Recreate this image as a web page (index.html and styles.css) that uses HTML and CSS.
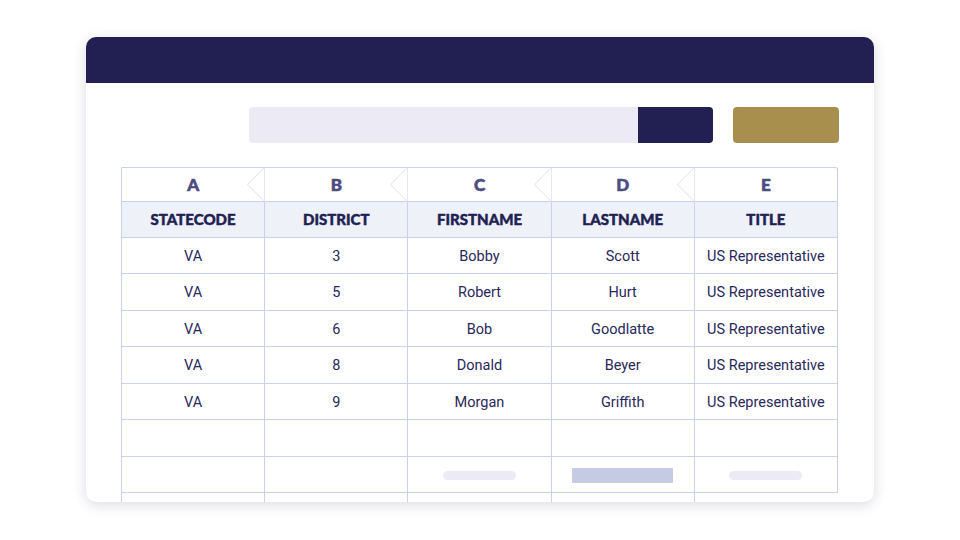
FILE: index.html
```html
<!DOCTYPE html>
<html>
<head>
<meta charset="utf-8">
<link rel="stylesheet" href="styles.css">
</head>
<body>
<div class="card">
  <div class="topbar"></div>
  <div class="toolbar">
    <div class="search"><div class="search-btn"></div></div>
    <div class="gold-btn"></div>
  </div>
  <div class="sheet">
    <div class="cell letter chev">A</div>
    <div class="cell letter chev">B</div>
    <div class="cell letter chev">C</div>
    <div class="cell letter chev">D</div>
    <div class="cell letter">E</div>

    <div class="cell head">STATECODE</div>
    <div class="cell head">DISTRICT</div>
    <div class="cell head">FIRSTNAME</div>
    <div class="cell head">LASTNAME</div>
    <div class="cell head">TITLE</div>

    <div class="cell">VA</div><div class="cell">3</div><div class="cell">Bobby</div><div class="cell">Scott</div><div class="cell">US Representative</div>
    <div class="cell">VA</div><div class="cell">5</div><div class="cell">Robert</div><div class="cell">Hurt</div><div class="cell">US Representative</div>
    <div class="cell">VA</div><div class="cell">6</div><div class="cell">Bob</div><div class="cell">Goodlatte</div><div class="cell">US Representative</div>
    <div class="cell">VA</div><div class="cell">8</div><div class="cell">Donald</div><div class="cell">Beyer</div><div class="cell">US Representative</div>
    <div class="cell">VA</div><div class="cell">9</div><div class="cell">Morgan</div><div class="cell">Griffith</div><div class="cell">US Representative</div>

    <div class="cell"></div><div class="cell"></div><div class="cell"></div><div class="cell"></div><div class="cell"></div>

    <div class="cell"></div><div class="cell"></div>
    <div class="cell"><span class="pill"></span></div>
    <div class="cell"><span class="block"></span></div>
    <div class="cell"><span class="pill"></span></div>

    <div class="cell"></div><div class="cell"></div><div class="cell"></div><div class="cell"></div><div class="cell last"></div>
  </div>
</div>
</body>
</html>
```

FILE: styles.css
```css
* { box-sizing: border-box; }
html, body {
  margin: 0;
  padding: 0;
  background: #ffffff;
  width: 960px;
  height: 540px;
  overflow: hidden;
}
body {
  padding: 37px 0 0 86px;
  font-family: Roboto, "Liberation Sans", sans-serif;
}
.card {
  width: 788px;
  height: 465px;
  background: #ffffff;
  border-radius: 10px;
  overflow: hidden;
  box-shadow: 0 3px 14px rgba(40, 40, 80, 0.16);
}
.topbar {
  height: 46px;
  background: #221f52;
}
.toolbar {
  display: flex;
  justify-content: flex-end;
  gap: 20px;
  padding: 24px 35px 0 0;
  height: 84px;
}
.search {
  width: 464px;
  height: 36px;
  background: #ecebf5;
  border-radius: 4px;
  display: flex;
  justify-content: flex-end;
}
.search-btn {
  width: 75px;
  height: 36px;
  background: #221f52;
  border-radius: 0 4px 4px 0;
}
.gold-btn {
  width: 106px;
  height: 36px;
  background: #a88f4e;
  border-radius: 4px;
}
.sheet {
  margin-left: 35px;
  width: 717px;
  display: grid;
  grid-template-columns: repeat(5, 1fr);
  grid-auto-rows: 36.5px;
  grid-template-rows: 34px 35.5px;
  border-left: 1.5px solid #c8d1ee;
  border-top: 1.5px solid #c8d1ee;
  border-top-left-radius: 2px;
  border-top-right-radius: 3px;
}
.cell {
  border-right: 1.5px solid #c8d1ee;
  border-bottom: 1.5px solid #c8d1ee;
  display: flex;
  align-items: center;
  justify-content: center;
  padding-top: 2px;
  font-size: 14.5px;
  color: #29285a;
  position: relative;
}
.cell.letter {
  padding-top: 0;
  font-family: Lato, "Open Sans", sans-serif;
  font-weight: 900;
  font-size: 17px;
  color: #4d4c82;
  -webkit-text-stroke: 0.6px #4d4c82;
  overflow: hidden;
  border-right-color: #e8e9f5;
}
.cell.letter:nth-child(5) {
  border-right-color: #c8d1ee;
}
.cell.chev::after {
  content: "";
  position: absolute;
  width: 24px;
  height: 24px;
  left: calc(100% - 12px);
  top: 4px;
  border-left: 1.5px solid #e6e8f4;
  border-bottom: 1.5px solid #e6e8f4;
  transform: rotate(45deg);
}
.cell.head {
  padding-top: 0;
  background: #eff1f9;
  font-family: Lato, "Open Sans", sans-serif;
  font-weight: 900;
  font-size: 15px;
  color: #221f52;
  -webkit-text-stroke: 0.45px #221f52;
}
.pill {
  display: block;
  width: 73px;
  height: 9px;
  border-radius: 5px;
  background: #ecebf5;
}
.block {
  display: block;
  width: 101px;
  height: 15px;
  border-radius: 1px;
  background: #c5cbe3;
}
.cell.last {
  border-right-color: transparent;
}
```
